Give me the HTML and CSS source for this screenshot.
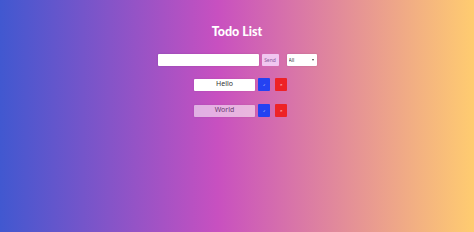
FILE: index.html
```html
<!DOCTYPE html>
<html lang="en">
  <head>
    <meta charset="UTF-8" />
    <meta name="viewport" content="width=device-width, initial-scale=1.0" />
    <title>Todo List</title>
    <link rel="stylesheet" href="styles.css">
  </head>
  <body>
    <header>
      <h1>Todo List</h1>
    </header>
    <form class="todo-form" onsubmit="return false">
      <input type="text" class="todo-input" />
      <button class="todo-send" type="submit">Send</button>
      <div class="select">
        <select name="todos" class="filter-todo">
          <option value="all">All</option>
          <option value="completed">Completed</option>
          <option value="uncompleted">Uncompleted</option>
        </select>
      </div>
    </form>
    <div class="todo-container">
      <ul class="todo-list">
        <li class="todo">
          <div class="todo-item">Hello</div>
          <button class="complete-btn">&#10003;</button>
          <button class="trash-btn">&#10005;</button>
        </li>
        <li class="todo completed">
          <div class="todo-item">World</div>
          <button class="complete-btn">&#10003;</button>
          <button class="trash-btn">&#10005;</button>
        </li>
      </ul>
    </div>
  </body>
</html>
```
FILE: styles.css
```css
* {
  margin: 0;
  padding: 0;
  box-sizing: border-box;
}

body {
  font-family: Lato, "Open Sans", sans-serif;
  background: linear-gradient(90deg, #4158d0 0%, #c850c0 46%, #ffcc70 100%);
  min-height: 100vh;
  color: #333;
}

header {
  padding-top: 24px;
  text-align: center;
}

header h1 {
  color: #fff;
  font-size: 12.5px;
  line-height: 16px;
  font-weight: 900;
}

.todo-form {
  display: flex;
  justify-content: center;
  align-items: center;
  margin-top: 14px;
}

.todo-input {
  width: 101px;
  height: 12px;
  border: none;
  border-radius: 1px;
  background: #fff;
  box-shadow: 0 0 2px rgba(0, 0, 0, 0.15);
}

.todo-send {
  width: 17px;
  height: 12px;
  margin-left: 3px;
  border: none;
  border-radius: 1px;
  background: #f1c6f0;
  color: #8a5a9a;
  font-family: "Noto Sans", sans-serif;
  font-size: 5px;
  cursor: pointer;
}

.select {
  display: flex;
  position: relative;
  margin-left: 8px;
}

.select::after {
  content: "";
  position: absolute;
  right: 3px;
  top: 5px;
  border-left: 1.5px solid transparent;
  border-right: 1.5px solid transparent;
  border-top: 2px solid #444;
  pointer-events: none;
}

.filter-todo {
  appearance: none;
  -webkit-appearance: none;
  width: 30px;
  height: 12px;
  border: none;
  border-radius: 1px;
  background: #fff;
  color: #333;
  font-family: "Noto Sans", sans-serif;
  font-size: 5px;
  padding-left: 2px;
  box-shadow: 0 0 2px rgba(0, 0, 0, 0.15);
}

.todo-container {
  display: flex;
  justify-content: center;
  margin-top: 12px;
}

.todo-list {
  list-style: none;
  padding-left: 7px;
}

.todo {
  display: flex;
  align-items: center;
  margin-bottom: 13px;
}

.todo-item {
  width: 61px;
  height: 12px;
  background: #fff;
  border-radius: 1px;
  text-align: center;
  font-family: "Noto Sans", sans-serif;
  font-size: 7px;
  line-height: 9px;
  color: #333;
  box-shadow: 0 0 2px rgba(0, 0, 0, 0.1);
}

.todo.completed .todo-item {
  background: rgba(255, 255, 255, 0.55);
  color: #6a3a70;
}

.complete-btn,
.trash-btn {
  width: 12px;
  height: 13px;
  border: none;
  border-radius: 1px;
  color: #fff;
  font-size: 3px;
  cursor: pointer;
}

.complete-btn {
  margin-left: 3px;
  background: #2442f2;
}

.trash-btn {
  margin-left: 5px;
  background: #ee2226;
}
```
